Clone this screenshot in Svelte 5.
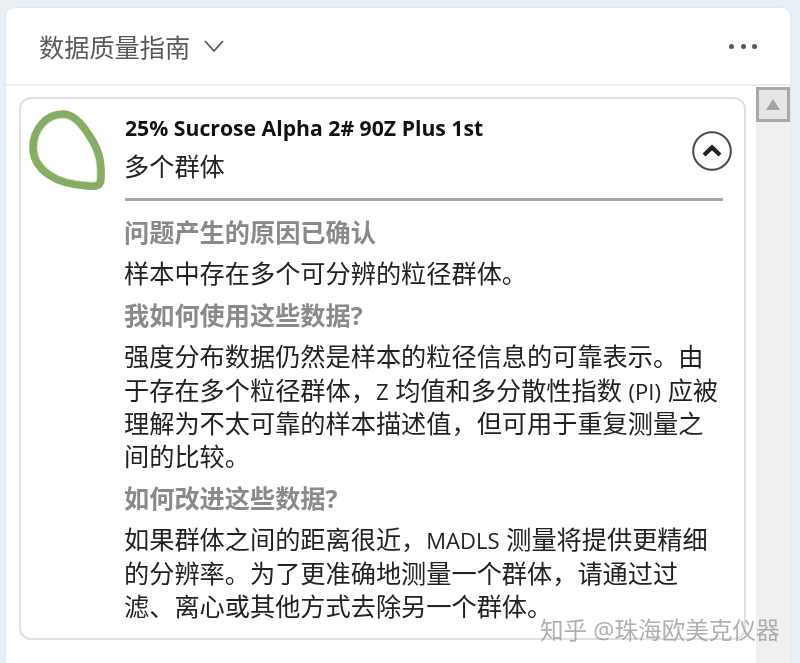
<script>
  const sections = [
    { q: '问题产生的原因已确认', a: [['样本中存在多个可分辨的粒径群体。']] },
    { q: '我如何使用这些数据?', a: [['强度分布数据仍然是样本的粒径信息的可靠表示。由'], ['于存在多个粒径群体，', 'Z ', '均值和多分散性指数', ' (PI) ', '应被'], ['理解为不太可靠的样本描述值，但可用于重复测量之'], ['间的比较。']] },
    { q: '如何改进这些数据?', a: [['如果群体之间的距离很近，', 'MADLS ', '测量将提供更精细'], ['的分辨率。为了更准确地测量一个群体，请通过过'], ['滤、离心或其他方式去除另一个群体。']] }
  ];
  const drop = 'M34 4 C17 4 4 19 4 38 C4 50 10 58 20 65 C30 72 42 75 58 76 C68 77 72 76 72 68 C73 50 69 38 60 25 C52 12 44 4 34 4 Z';
</script>

<div class="page">
  <div class="panel">
    <header class="bar">
      <div class="title">
        <span>数据质量指南</span>
        <svg width="22" height="14" viewBox="0 0 22 14"><path d="M2 2 L11 12 L20 2" fill="none" stroke="#555" stroke-width="1.800"/></svg>
      </div>
      <div class="dots"><i></i><i></i><i></i></div>
    </header>
    <div class="body">
      <div class="content">
        <article class="card">
          <div class="top">
            <svg class="blob" width="77" height="84" viewBox="0 0 77 84">
              <path d={drop} fill="#fff"/>
              <path d={drop} fill="none" stroke="#d3e8bd" stroke-width="7" transform="translate(38 40) scale(.96) translate(-38 -40)"/>
              <path d={drop} fill="none" stroke="#86ad63" stroke-width="7.500" stroke-linejoin="round"/>
            </svg>
            <div class="head">
              <div class="names">
                <div class="sample">25% Sucrose Alpha 2# 90Z Plus 1st</div>
                <div class="kind">多个群体</div>
              </div>
              <svg class="toggle" width="40" height="42" viewBox="0 0 40 42">
                <circle cx="20" cy="21" r="18.800" fill="none" stroke="#4a4a4a" stroke-width="2"/>
                <path d="M12 25 L20 17.500 L28 25" fill="none" stroke="#222" stroke-width="4.200"/>
              </svg>
            </div>
          </div>
          <div class="text">
            {#each sections as s}
              <h3>{s.q}</h3>
              {#each s.a as line}
                <p>{#each line as part, i}{#if i % 2}<span class="en">{part}</span>{:else}{part}{/if}{/each}</p>
              {/each}
            {/each}
          </div>
        </article>
      </div>
      <aside class="scroll">
        <div class="up"><span class="tri"></span></div>
      </aside>
    </div>
  </div>
  <div class="mark">知乎 @珠海欧美克仪器</div>
</div>

<style>
  :global(body) { margin: 0; background: #e9f0f5; }
  .page { position: relative; width: 800px; height: 663px; overflow: hidden; padding: 8px 10px 0 6px; box-sizing: border-box; font-family: "Open Sans", "Noto Sans CJK SC", sans-serif; filter: blur(0.35px); }
  .panel { height: 655px; background: #fff; border-radius: 8px 8px 0 0; display: flex; flex-direction: column; box-shadow: 0 0 2px #cfd6dc; }
  .bar { height: 78px; box-sizing: border-box; border-bottom: 2px solid #eceeef; display: flex; align-items: center; justify-content: space-between; padding: 0 33px 0 33px; flex: none; }
  .title { display: flex; align-items: center; gap: 13px; font-size: 25.200px; color: #5a5a5a; }
  .dots { display: flex; gap: 6.500px; }
  .dots i { width: 5px; height: 5px; border-radius: 50%; background: #555; }
  .body { flex: 1; display: flex; min-height: 0; }
  .content { flex: 1; padding: 11px 10px 0 13px; min-width: 0; }
  .scroll { width: 34px; background: #f0f0f0; flex: none; margin-top: 1px; }
  .up { height: 35px; box-sizing: border-box; border: 3px solid #a9a9a9; background: #e6e6e6; display: flex; align-items: center; justify-content: center; }
  .tri { width: 0; height: 0; border-left: 7px solid transparent; border-right: 7px solid transparent; border-bottom: 11px solid #a3a3a3; }
  .card { height: 543px; box-sizing: border-box; border: 2px solid #e0e0e0; border-radius: 12px; }
  .top { display: flex; padding: 10px 21px 0 8px; gap: 19px; }
  .blob { flex: none; margin-top: 1px; }
  .head { flex: 1; display: flex; align-items: flex-start; justify-content: space-between; height: 92px; box-sizing: border-box; border-bottom: 3px solid #a6a6a6; }
  .names { margin-top: 1px; }
  .sample { font-weight: 700; font-size: 21.200px; line-height: 36px; color: #111; white-space: nowrap; }
  .kind { font-size: 25.200px; line-height: 36px; margin: 2px 0 0 -1px; color: #222; }
  .toggle { flex: none; margin: 21px -9px 0 0; }
  .text { padding: 11px 0 0 103px; }
  h3 { margin: 0; height: 40px; font-size: 25.200px; line-height: 40px; font-weight: 700; color: #8a8a8a; }
  p { margin: 0; height: 33.300px; font-size: 25.200px; line-height: 33.300px; color: #222; white-space: nowrap; }
  .en { font-size: 22px; line-height: 1; word-spacing: 1px; }
  h3 + p { margin-top: 5px; }
  p + h3 { margin-top: 5px; }
  .mark { position: absolute; left: 540px; top: 615px; font-size: 23.600px; line-height: 30px; color: rgba(150,150,150,0.75); white-space: nowrap; }
</style>
